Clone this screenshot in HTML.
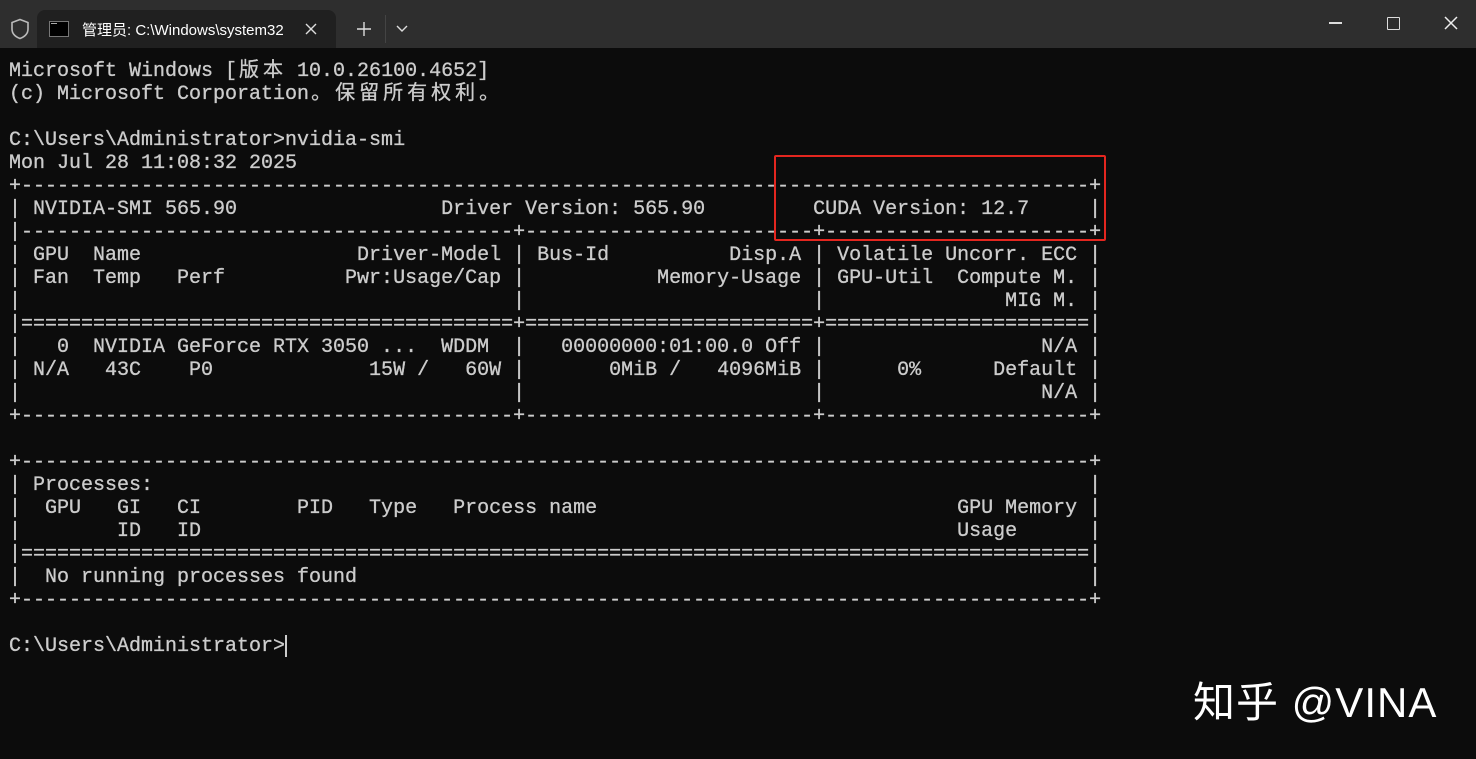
<!DOCTYPE html>
<html><head><meta charset="utf-8"><style>
html,body{margin:0;padding:0;width:1476px;height:759px;overflow:hidden;background:#0c0c0c}
.tb{position:absolute;left:0;top:0;width:1476px;height:48px;background:#2e2e2e}
.tab{position:absolute;left:37px;top:10px;width:299px;height:38px;background:#202020;border-radius:8px 8px 0 0}
.tt{position:absolute;left:82px;top:19px;color:#fff;font:15px "Liberation Sans","Noto Sans CJK SC",sans-serif}
pre{position:absolute;left:9px;top:60px;margin:0;font:20px/23px "Liberation Mono","Noto Sans CJK SC",monospace;color:#cccccc;-webkit-text-stroke:0.3px #cccccc}
.c{display:inline-block;width:24px;text-align:center}
.red{position:absolute;left:774px;top:155px;width:328px;height:82px;border:2.5px solid #e4261f;border-radius:2px}
.wm{position:absolute;left:1193px;top:669px;color:#fff;font:42px "Liberation Sans","Noto Sans CJK SC",sans-serif;letter-spacing:1px}
.cur{position:absolute;left:285px;top:635px;width:1.5px;height:22px;background:#ccc}
</style></head><body>
<div class="tb">
<svg style="position:absolute;left:10px;top:18px" width="20" height="22" viewBox="0 0 20 22"><path d="M10 1.5 L18 4.5 V11 C18 16 14 19 10 20.5 C6 19 2 16 2 11 V4.5 Z" fill="none" stroke="#bbb" stroke-width="1.6"/></svg>
<div class="tab"></div>
<div style="position:absolute;left:49px;top:21px;width:18px;height:14px;background:#000;border:1px solid #777"></div>
<div style="position:absolute;left:51px;top:23px;width:6px;height:1px;background:#aaa"></div>
<div class="tt">管理员: C:\Windows\system32</div>
<svg style="position:absolute;left:305px;top:23px" width="12" height="12"><path d="M1 1L11 11M11 1L1 11" stroke="#ddd" stroke-width="1.4"/></svg>
<svg style="position:absolute;left:357px;top:22px" width="14" height="14"><path d="M7 0V14M0 7H14" stroke="#ddd" stroke-width="1.4"/></svg>
<div style="position:absolute;left:385px;top:15px;width:1px;height:28px;background:#444"></div>
<svg style="position:absolute;left:396px;top:25px" width="12" height="8"><path d="M1 1L6 6L11 1" fill="none" stroke="#ddd" stroke-width="1.4"/></svg>
<div style="position:absolute;left:1329px;top:22px;width:13px;height:1.5px;background:#ddd"></div>
<div style="position:absolute;left:1387px;top:17px;width:11px;height:11px;border:1.5px solid #ddd;border-radius:1px"></div>
<svg style="position:absolute;left:1444px;top:16px" width="14" height="14"><path d="M1 1L13 13M13 1L1 13" stroke="#eee" stroke-width="1.5"/></svg>
</div>
<pre>Microsoft Windows [<span class="c">版</span><span class="c">本</span> 10.0.26100.4652]
(c) Microsoft Corporation<span class="c">。</span><span class="c">保</span><span class="c">留</span><span class="c">所</span><span class="c">有</span><span class="c">权</span><span class="c">利</span><span class="c">。</span>

C:\Users\Administrator&gt;nvidia-smi
Mon Jul 28 11:08:32 2025
+-----------------------------------------------------------------------------------------+
| NVIDIA-SMI 565.90                 Driver Version: 565.90         CUDA Version: 12.7     |
|-----------------------------------------+------------------------+----------------------+
| GPU  Name                  Driver-Model | Bus-Id          Disp.A | Volatile Uncorr. ECC |
| Fan  Temp   Perf          Pwr:Usage/Cap |           Memory-Usage | GPU-Util  Compute M. |
|                                         |                        |               MIG M. |
|=========================================+========================+======================|
|   0  NVIDIA GeForce RTX 3050 ...  WDDM  |   00000000:01:00.0 Off |                  N/A |
| N/A   43C    P0             15W /   60W |       0MiB /   4096MiB |      0%      Default |
|                                         |                        |                  N/A |
+-----------------------------------------+------------------------+----------------------+

+-----------------------------------------------------------------------------------------+
| Processes:                                                                              |
|  GPU   GI   CI        PID   Type   Process name                              GPU Memory |
|        ID   ID                                                               Usage      |
|=========================================================================================|
|  No running processes found                                                             |
+-----------------------------------------------------------------------------------------+

C:\Users\Administrator&gt;</pre>
<div class="cur"></div>
<div class="red"></div>
<div class="wm">知乎 @VINA</div>
</body></html>
